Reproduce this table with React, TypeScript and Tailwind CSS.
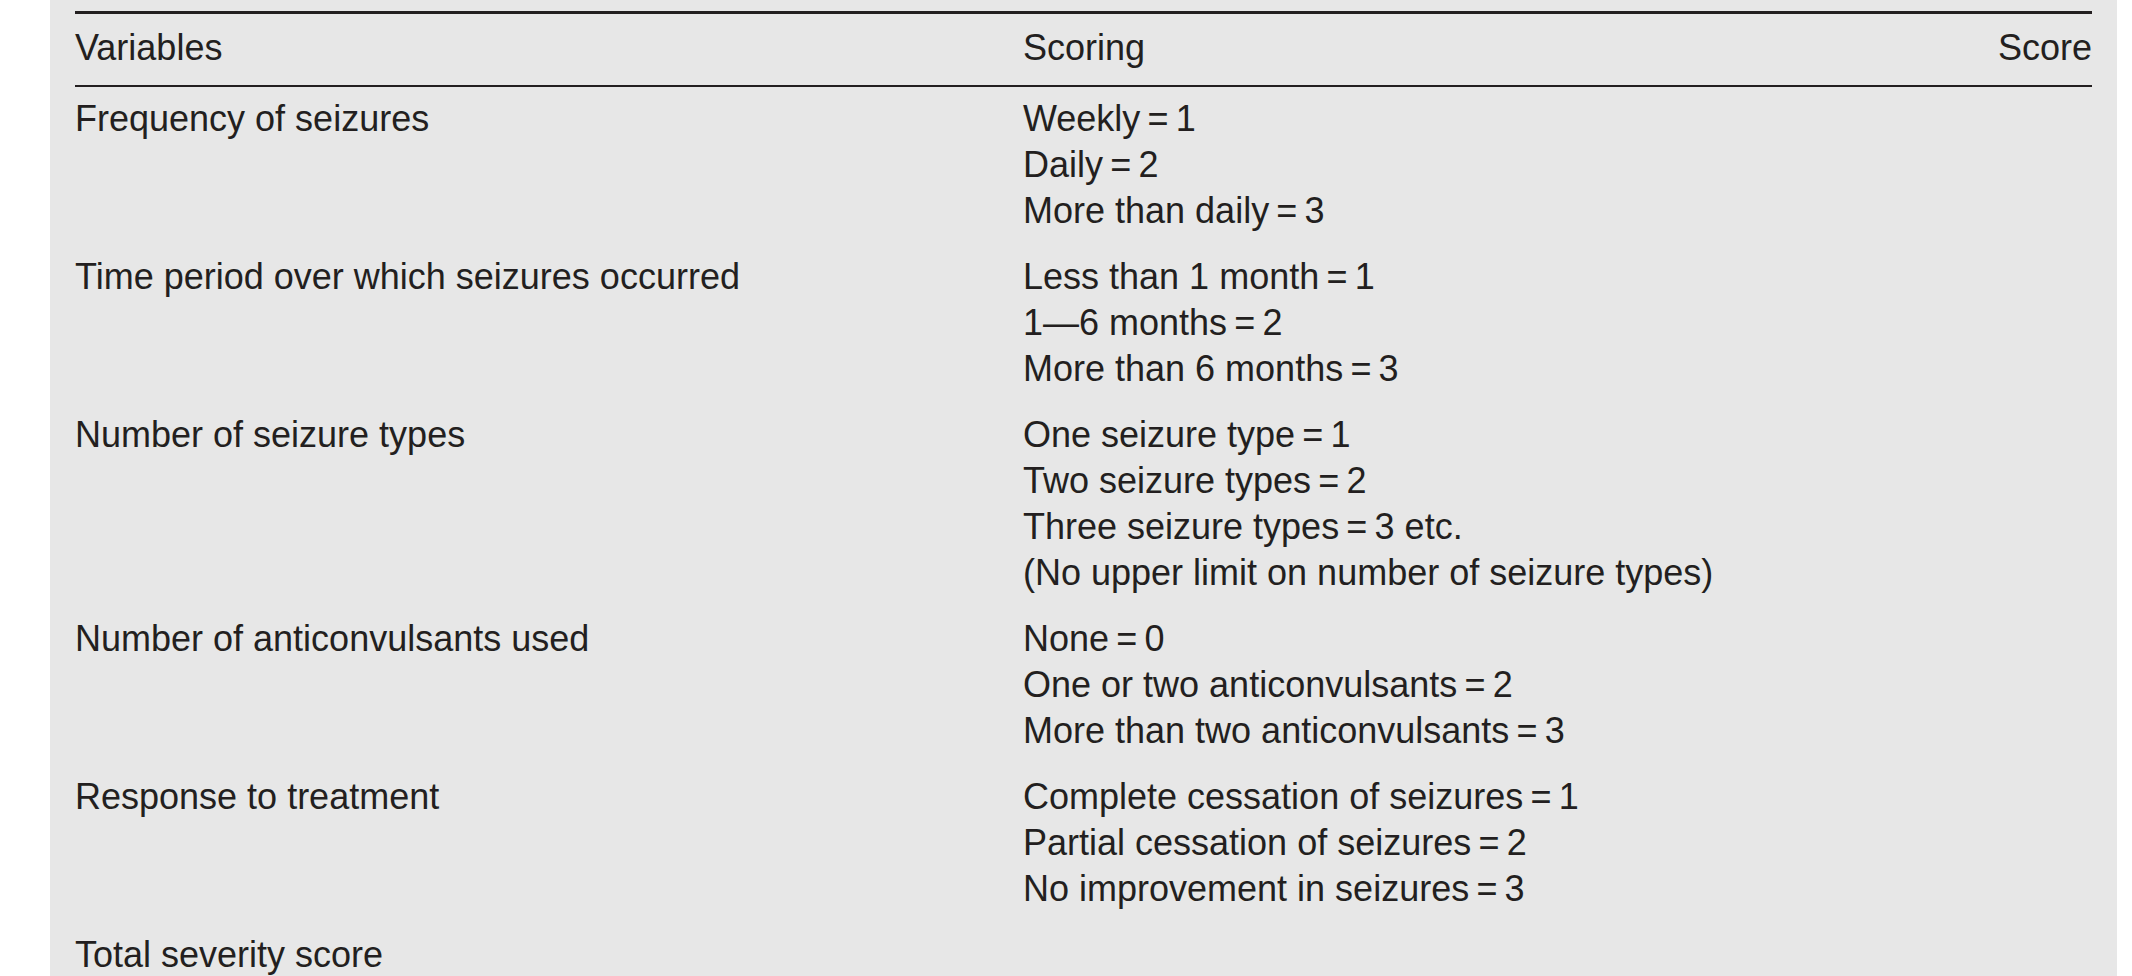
const rows: { variable: string; scoring: string[] }[] = [
  {
    variable: 'Frequency of seizures',
    scoring: ['Weekly\u2009=\u20091', 'Daily\u2009=\u20092', 'More than daily\u2009=\u20093'],
  },
  {
    variable: 'Time period over which seizures occurred',
    scoring: ['Less than 1 month\u2009=\u20091', '1\u20146 months\u2009=\u20092', 'More than 6 months\u2009=\u20093'],
  },
  {
    variable: 'Number of seizure types',
    scoring: [
      'One seizure type\u2009=\u20091',
      'Two seizure types\u2009=\u20092',
      'Three seizure types\u2009=\u20093 etc.',
      '(No upper limit on number of seizure types)',
    ],
  },
  {
    variable: 'Number of anticonvulsants used',
    scoring: ['None\u2009=\u20090', 'One or two anticonvulsants\u2009=\u20092', 'More than two anticonvulsants\u2009=\u20093'],
  },
  {
    variable: 'Response to treatment',
    scoring: [
      'Complete cessation of seizures\u2009=\u20091',
      'Partial cessation of seizures\u2009=\u20092',
      'No improvement in seizures\u2009=\u20093',
    ],
  },
];

export default function App() {
  return (
    <div className="min-h-screen bg-white flex font-['Liberation_Sans',Arial,sans-serif] text-[36px] leading-[46px] text-[#231f20]">
      <div className="ml-[50px] w-[2067px] min-h-screen bg-[#e7e7e7] px-[25px] pt-[11px]">
        {/* Header */}
        <div className="flex border-t-[3px] border-b-2 border-[#231f20] pt-[11px] pb-[14px]">
          <div className="w-[948px]">Variables</div>
          <div className="flex-1">Scoring</div>
          <div className="text-right">Score</div>
        </div>

        {/* Body */}
        <div className="flex flex-col gap-[20px] pt-[9px]">
          {rows.map((row) => (
            <div key={row.variable} className="flex">
              <div className="w-[948px] shrink-0">{row.variable}</div>
              <div className="flex-1 flex flex-col">
                {row.scoring.map((s) => (
                  <span key={s}>{s}</span>
                ))}
              </div>
              <div className="w-[100px]" />
            </div>
          ))}
          <div className="flex">
            <div className="w-[948px] shrink-0">Total severity score</div>
          </div>
        </div>
      </div>
    </div>
  );
}
